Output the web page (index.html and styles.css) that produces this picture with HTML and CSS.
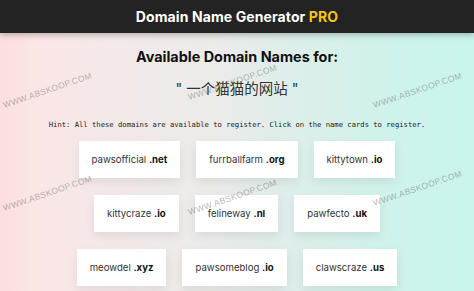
FILE: index.html
```html
<!DOCTYPE html>
<html lang="en">
<head>
    <meta charset="UTF-8">
    <meta name="viewport" content="width=device-width, initial-scale=1.0">
    <title>Domain Name Generator PRO</title>
    <link rel="stylesheet" href="styles.css">
</head>
<body>
    <div class="header">
        <div class="brand">Domain Name Generator <span class="pro">PRO</span></div>
    </div>

    <div class="results">
        <h2 class="title">Available Domain Names for:</h2>
        <div class="query">" 一个猫猫的网站 "</div>
        <p class="hint">Hint: All these domains are available to register. Click on the name cards to register.</p>

        <div class="cards">
            <a class="card" href="#">pawsofficial <b>.net</b></a>
            <a class="card" href="#">furrballfarm <b>.org</b></a>
            <a class="card" href="#">kittytown <b>.io</b></a>
            <a class="card" href="#">kittycraze <b>.io</b></a>
            <a class="card" href="#">felineway <b>.nl</b></a>
            <a class="card" href="#">pawfecto <b>.uk</b></a>
            <a class="card" href="#">meowdel <b>.xyz</b></a>
            <a class="card" href="#">pawsomeblog <b>.io</b></a>
            <a class="card" href="#">clawscraze <b>.us</b></a>
        </div>
    </div>

    <!-- watermark layer -->
    <div class="marks">
        <span class="mark m4">WWW.ABSKOOP.COM</span>
        <span class="mark m5">WWW.ABSKOOP.COM</span>
        <span class="mark m6">WWW.ABSKOOP.COM</span>
        <span class="mark m7">WWW.ABSKOOP.COM</span>
        <span class="mark m8">WWW.ABSKOOP.COM</span>
        <span class="mark m9">WWW.ABSKOOP.COM</span>
    </div>
</body>
</html>
```

FILE: styles.css
```css
html, body { height: 100%; }
body { margin: 0; font-family: Inter, "Noto Sans CJK SC", sans-serif; color: #111; overflow: hidden;
       background: linear-gradient(90deg, #fcdfdf 0%, #fbe6e6 8%, #f3e9e9 25%, #ebebea 45%, #dbefea 65%, #cdf3ec 85%, #c8f4ec 100%); }

.header { height: 33px; background: #232323; box-shadow: 0 2px 6px rgba(0,0,0,0.25); display: flex; justify-content: center; align-items: center; }
.brand { color: #fff; font-weight: 700; font-size: 14px; letter-spacing: 0.1px; }
.pro { color: #f6c416; }

.results { text-align: center; }
.title { margin: 14px 0 0; font-size: 14.4px; line-height: 20px; font-weight: 700; }
.query { margin-top: 11px; font-size: 14.5px; line-height: 22px; color: #333; }
.hint { margin: 20px 0 0; font-family: "DejaVu Sans Mono", monospace; font-size: 7.2px; line-height: 10px; color: #222; }

.cards { width: 330px; margin: 11px auto 0; display: flex; flex-wrap: wrap; justify-content: center; gap: 17px 16px; }
.card { height: 37px; padding: 0 13px; background: #fff; display: flex; align-items: center; font-size: 9.6px; color: #333; text-decoration: none;
        box-shadow: 0 4px 10px rgba(0,0,0,0.08); white-space: pre; }
.card b { color: #111; font-weight: 700; }

.marks { position: absolute; inset: 0; pointer-events: none; overflow: hidden; }
.mark { position: absolute; font-family: "Liberation Sans", sans-serif; font-size: 8.5px; line-height: 9px; letter-spacing: 0.3px; color: rgba(110,110,110,0.5);
        transform: rotate(-19deg); transform-origin: left bottom; white-space: nowrap; }
.m4 { left: 5px; top: 101px; }
.m5 { left: 190px; top: 93px; }
.m6 { left: 375px; top: 101px; }
.m7 { left: 5px; top: 204px; }
.m8 { left: 190px; top: 208px; }
.m9 { left: 375px; top: 199px; }
```
